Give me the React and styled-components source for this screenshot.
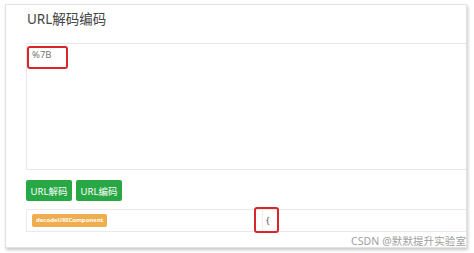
import React from 'react';
import styled, { createGlobalStyle } from 'styled-components';

const Global = createGlobalStyle`
  html, body {
    margin: 0;
    padding: 0;
    background: #fff;
    overflow: hidden;
  }
  body {
    font-family: "Noto Sans", "Noto Sans CJK SC", sans-serif;
  }
  *, *::before, *::after {
    box-sizing: border-box;
  }
`;

const Page = styled.div`
  position: relative;
  width: 474px;
  height: 253px;
  padding: 4px 0 0 5px;
`;

const Card = styled.div`
  width: 462px;
  height: 244px;
  background: #fff;
  border: 1px solid #e2e2e2;
  box-shadow: 1px 2px 3px rgba(0, 0, 0, 0.22);
  padding: 0 0 0 20px;
  display: flex;
  flex-direction: column;
`;

const Title = styled.div`
  font-size: 13.5px;
  color: #444;
  height: 38px;
  line-height: 28px;
  padding-left: 1px;
`;

const Input = styled.div`
  position: relative;
  height: 127px;
  border: 1px solid #e6e6e6;
  border-right: none;
  border-radius: 2px 0 0 2px;
  padding: 4px 5px;
  font-size: 9.5px;
  color: #777;
`;

const Mark = styled.span`
  position: absolute;
  left: ${p => p.left}px;
  top: ${p => p.top}px;
  width: ${p => p.width}px;
  height: ${p => p.height}px;
  border: 2px solid #d9262b;
  border-radius: 3px;
`;

const Buttons = styled.div`
  display: flex;
  gap: 4px;
  margin-top: 10px;
`;

const Button = styled.button`
  background: #28a745;
  color: #fff;
  border: none;
  border-radius: 2px;
  height: 21px;
  width: 46px;
  padding: 0;
  font-family: inherit;
  font-size: 9.5px;
`;

const Result = styled.div`
  position: relative;
  margin-top: 8px;
  height: 23px;
  border: 1px solid #eaeaea;
  border-right: none;
  display: grid;
  grid-template-columns: 235px 1fr;
  align-items: center;
`;

const Cell = styled.div`
  height: 100%;
  display: flex;
  align-items: center;
  padding-left: ${p => p.pad}px;
  border-left: ${p => (p.divide ? '1px solid #eee' : 'none')};
  font-size: 9px;
  color: #555;
`;

const Badge = styled.span`
  background: #f0ad4e;
  color: #fff;
  font-size: 6px;
  font-weight: bold;
  border-radius: 2px;
  padding: 2px 4px;
  line-height: 9px;
`;

const Watermark = styled.div`
  position: absolute;
  right: 8px;
  bottom: 5px;
  font-size: 10.5px;
  color: #a0a0a0;
  letter-spacing: 0.1px;
`;

export default function App() {
  return (
    <Page>
      <Global />
      <Card>
        <Title>URL解码编码</Title>
        <Input>
          %7B
          <Mark left={0} top={2} width={41} height={23} />
        </Input>
        <Buttons>
          <Button>URL解码</Button>
          <Button>URL编码</Button>
        </Buttons>
        <Result>
          <Cell pad={5}>
            <Badge>decodeURIComponent</Badge>
          </Cell>
          <Cell pad={3} divide>{'{'}</Cell>
          <Mark left={227} top={-3} width={25} height={26} />
        </Result>
      </Card>
      <Watermark>CSDN @默默提升实验室</Watermark>
    </Page>
  );
}
